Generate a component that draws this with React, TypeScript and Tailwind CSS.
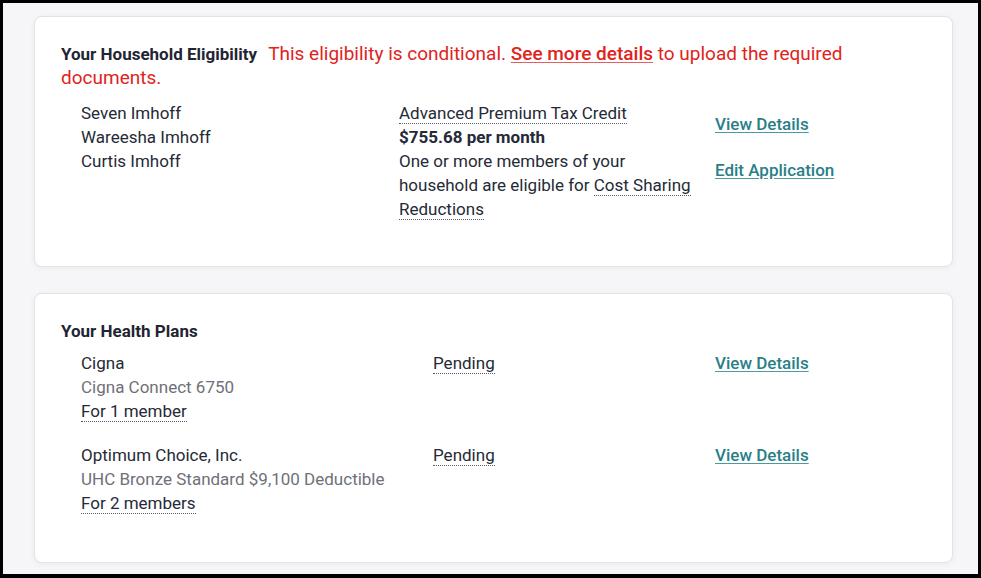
import React from 'react';

const dotted = 'border-b border-dotted border-[#555a66]';
const link = 'font-medium text-[#2a7f87] underline decoration-[#4a9aa0] underline-offset-2';

export default function App() {
  const plans = [
    { carrier: 'Cigna', plan: 'Cigna Connect 6750', members: 'For 1 member' },
    { carrier: 'Optimum Choice, Inc.', plan: 'UHC Bronze Standard $9,100 Deductible', members: 'For 2 members' },
  ];

  return (
    <div
      className="h-[578px] w-[981px] overflow-hidden border-[3px] border-b-4 border-black bg-[#f6f6f8] text-[17px] leading-6 text-[#252a36]"
      style={{ fontFamily: 'Roboto, "Liberation Sans", sans-serif' }}
    >
      <div className="flex flex-col gap-[26px] pl-[31px] pr-[25px] pt-[13px]">
        {/* Eligibility */}
        <div className="h-[251px] rounded-lg border border-[#e2e2e8] bg-white pl-[26px] pr-[60px] pt-[25px] shadow-[0_1px_6px_rgba(0,0,0,0.05)]">
          <p>
            <span className="mr-[11px] text-[17px] font-bold text-[#1f2533]">Your Household Eligibility</span>
            <span className="text-[19px] text-[#e0231b]">
              This eligibility is conditional.{' '}
              <a className="font-medium underline decoration-[#e06060] underline-offset-2">See more details</a> to upload the
              required documents.
            </span>
          </p>
          <div className="mt-[11px] flex">
            <div className="w-[338px] pl-5">
              <p>Seven Imhoff</p>
              <p>Wareesha Imhoff</p>
              <p>Curtis Imhoff</p>
            </div>
            <div className="w-[316px]">
              <p>
                <span className={dotted}>Advanced Premium Tax Credit</span>
              </p>
              <p className="font-bold">$755.68 per month</p>
              <p className="w-[300px]">
                One or more members of your household are eligible for{' '}
                <span className={dotted}>Cost Sharing Reductions</span>
              </p>
            </div>
            <div className="flex flex-col gap-[22px] pt-[11px]">
              <a className={link}>View Details</a>
              <a className={link}>Edit Application</a>
            </div>
          </div>
        </div>

        {/* Health plans */}
        <div className="h-[270px] rounded-lg border border-[#e2e2e8] bg-white pl-[26px] pt-[25px] shadow-[0_1px_6px_rgba(0,0,0,0.05)]">
          <h3 className="text-[17px] font-bold text-[#1f2533]">Your Health Plans</h3>
          <div className="mt-[8px] flex flex-col gap-5">
            {plans.map((p) => (
              <div key={p.carrier} className="flex">
                <div className="w-[372px] pl-5">
                  <p>{p.carrier}</p>
                  <p className="text-[#6f7079]">{p.plan}</p>
                  <p>
                    <span className={dotted}>{p.members}</span>
                  </p>
                </div>
                <div className="w-[282px]">
                  <span className={dotted}>Pending</span>
                </div>
                <div>
                  <a className={link}>View Details</a>
                </div>
              </div>
            ))}
          </div>
        </div>
      </div>
    </div>
  );
}
